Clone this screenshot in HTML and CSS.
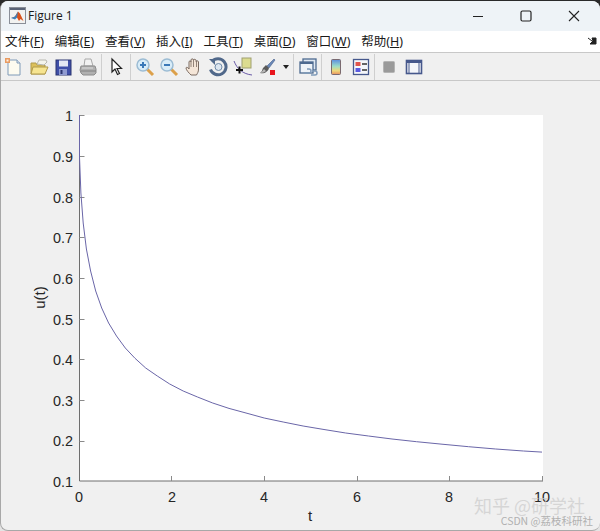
FILE: index.html
```html
<!DOCTYPE html>
<html lang="zh">
<head>
    <meta charset="utf-8" />
    <title>Figure 1</title>
    <link rel="stylesheet" href="styles.css">
</head>
<body>
<div class="window">
    <div class="titlebar">
        <svg class="app-icon" width="17" height="17" viewBox="0 0 17 17">
            <rect x="0.500" y="0.500" width="16" height="16" fill="#f2f2f0" stroke="#8a8f98"/>
            <rect x="1" y="1" width="15" height="2" fill="#5a6478"/>
            <path d="M2 11l4-1.500 3-5 2 2 3.500 7.500-3-2-1.500 2-2-3.500z" fill="#d8521c"/>
            <path d="M2 11l4-1.500 3-5-1 6-2 2z" fill="#3f80b8"/>
        </svg>
        <span class="title">Figure 1</span>
        <div class="winbtns">
            <svg width="12" height="12" viewBox="0 0 12 12"><path d="M1 6.500h10" stroke="#222" stroke-width="1.200"/></svg>
            <svg width="12" height="12" viewBox="0 0 12 12"><rect x="1" y="1" width="10" height="10" rx="1.500" fill="none" stroke="#222" stroke-width="1.200"/></svg>
            <svg width="12" height="12" viewBox="0 0 12 12"><path d="M1 1l10 10M11 1l-10 10" stroke="#222" stroke-width="1.100"/></svg>
        </div>
    </div>
    <div class="menubar">
        <span>文件(<u>F</u>)</span>
        <span>编辑(<u>E</u>)</span>
        <span>查看(<u>V</u>)</span>
        <span>插入(<u>I</u>)</span>
        <span>工具(<u>T</u>)</span>
        <span>桌面(<u>D</u>)</span>
        <span>窗口(<u>W</u>)</span>
        <span>帮助(<u>H</u>)</span>
        <svg class="dock" width="10" height="8" viewBox="0 0 10 8"><path d="M1 1l4 3M5 1h4v6H3l3-3z" fill="#222" stroke="#222"/></svg>
    </div>
    <div class="toolbar">
        <!-- new -->
        <div class="tool"><svg width="20" height="20" viewBox="0 0 20 20"><path d="M4 3h9l3 3v12H4z" fill="#fdfbf0" stroke="#7f9ab8"/><path d="M13 3v3h3" fill="#dfe6ee" stroke="#7f9ab8"/><rect x="1" y="1" width="5" height="5" fill="#e89a60"/><rect x="2.500" y="2.500" width="2" height="2" fill="#fff0e0"/></svg></div>
        <!-- open -->
        <div class="tool"><svg width="20" height="20" viewBox="0 0 20 20"><path d="M2 6h5l1 2h8v9H2z" fill="#dcc05a" stroke="#b09a4c"/><path d="M8 7l2-4h7l1 2-3 3z" fill="#f4f4ec" stroke="#b8b8b0"/><path d="M2 17l2-7h15l-3 7z" fill="#f6e490" stroke="#b09a4c"/></svg></div>
        <!-- save -->
        <div class="tool"><svg width="20" height="20" viewBox="0 0 20 20"><rect x="3" y="3" width="15" height="15" fill="#3f4fa8" stroke="#2b3570"/><rect x="6" y="3.500" width="9" height="6" fill="#e4e8f4"/><rect x="6" y="12" width="8" height="6" fill="#8f9ad0"/><rect x="7.500" y="13" width="2" height="4" fill="#2b3570"/></svg></div>
        <!-- print -->
        <div class="tool"><svg width="20" height="20" viewBox="0 0 20 20"><path d="M7 2h6l2 7H6z" fill="#f2f2f2" stroke="#a8a8a8"/><path d="M3 9h14l1 3v4l-2 2H5l-2-2-1-3z" fill="#b0b0b0" stroke="#8c8c8c"/><path d="M3 14h15" stroke="#808080"/><path d="M4 11h11" stroke="#dcdcdc"/></svg></div>
        <i class="sep"></i>
        <!-- arrow -->
        <div class="tool"><svg width="20" height="20" viewBox="0 0 20 20"><path d="M6 2v13l3-3 2.500 5.500 2-1-2.500-5h4.500z" fill="#fff" stroke="#222" stroke-width="1.200"/></svg></div>
        <i class="sep"></i>
        <!-- zoom in -->
        <div class="tool"><svg width="20" height="20" viewBox="0 0 20 20"><path d="M12 12l6 6" stroke="#dca04a" stroke-width="3"/><circle cx="8" cy="8" r="6" fill="#d8ecf8" stroke="#9cbcd4" stroke-width="1.500"/><path d="M5 8h6M8 5v6" stroke="#3a78b8" stroke-width="2"/></svg></div>
        <!-- zoom out -->
        <div class="tool"><svg width="20" height="20" viewBox="0 0 20 20"><path d="M12 12l6 6" stroke="#dca04a" stroke-width="3"/><circle cx="8" cy="8" r="6" fill="#d8ecf8" stroke="#9cbcd4" stroke-width="1.500"/><path d="M5 8h6" stroke="#3a78b8" stroke-width="2"/></svg></div>
        <!-- pan -->
        <div class="tool"><svg width="20" height="20" viewBox="0 0 20 20"><path d="M7 18c-2-2-5-5-5-7 0-1 2-1 3 1V5c0-1.500 2-1.500 2 0V3c0-1.500 2.500-1.500 2.500 0v0c0-1 2.500-1 2.500.500v1c0-1 2.500-1 2.500.500V12c0 3-1 4-2 6z" fill="#f5e6d8" stroke="#7a6a60"/><path d="M7 5v5M9.500 3v7M12.500 4v6" stroke="#7a6a60" stroke-width=".8"/></svg></div>
        <!-- rotate -->
        <div class="tool"><svg width="20" height="20" viewBox="0 0 20 20"><path d="M4 4.500a8 8 0 1 1-1.500 8" fill="none" stroke="#50688a" stroke-width="3"/><path d="M1 2h6v6z" fill="#50688a"/><circle cx="10.500" cy="10" r="3.500" fill="#dce6f0" stroke="#6f8aa8"/></svg></div>
        <!-- data cursor -->
        <div class="tool"><svg width="20" height="20" viewBox="0 0 20 20"><path d="M1 4c3 8 9 13 18 14" fill="none" stroke="#6a5aa8"/><rect x="9" y="1" width="9" height="10" fill="#dcdc90" stroke="#a0a070"/><path d="M3 13h7M6.500 9.500v7" stroke="#111" stroke-width="2"/></svg></div>
        <!-- brush -->
        <div class="tool"><svg width="20" height="20" viewBox="0 0 20 20"><path d="M10 9l7-7 1 1-6 8z" fill="#6a88b8" stroke="#47608a" stroke-width=".6"/><path d="M9 8l3 3c-1 4-5 6-9 5 2-1 2-3 3-5z" fill="#5a5a5a"/><path d="M3 16c2-1 3-3 4-4l2 2c-1 1-3 2-6 2z" fill="#b8b8b8"/><rect x="13" y="13" width="5" height="5" fill="#e8141c"/></svg></div>
        <div class="drop"></div>
        <i class="sep"></i>
        <!-- link -->
        <div class="tool"><svg width="20" height="20" viewBox="0 0 20 20"><rect x="5" y="2" width="13" height="11" fill="#dfe8f2" stroke="#4d6a90" stroke-width="1.300"/><rect x="2" y="5" width="13" height="11" fill="#eef3f8" stroke="#4d6a90" stroke-width="1.300"/><rect x="2" y="5" width="13" height="2" fill="#4d6a90"/><path d="M6 16h5a2 2 0 0 0 0-4H9M13 18h4a2 2 0 0 0 0-4h-3" fill="none" stroke="#7f9ab8" stroke-width="1.500"/></svg></div>
        <i class="sep"></i>
        <!-- colorbar -->
        <div class="tool"><svg width="20" height="20" viewBox="0 0 20 20"><defs><linearGradient id="cbar" x1="0" y1="0" x2="0" y2="1"><stop offset="0" stop-color="#5a8ce0"/><stop offset=".45" stop-color="#9cdcc8"/><stop offset=".75" stop-color="#f0d878"/><stop offset="1" stop-color="#e89060"/></linearGradient></defs><rect x="5.500" y="2.500" width="9" height="15" rx="1" fill="url(#cbar)" stroke="#7a6a70"/></svg></div>
        <!-- legend -->
        <div class="tool"><svg width="20" height="20" viewBox="0 0 20 20"><rect x="2.500" y="2.500" width="15" height="15" fill="#f4f6fa" stroke="#46588c" stroke-width="1.300"/><rect x="4.500" y="5" width="5" height="4" fill="#e0544c"/><rect x="4.500" y="11" width="5" height="4" fill="#5a5ae0"/><path d="M11 7h5M11 13h5" stroke="#333" stroke-width="1.300"/></svg></div>
        <i class="sep"></i>
        <!-- hide tools -->
        <div class="tool"><svg width="20" height="20" viewBox="0 0 20 20"><rect x="4.500" y="4.500" width="11" height="11" rx="1" fill="#9a9a9a" stroke="#b4b4b4"/></svg></div>
        <!-- show tools -->
        <div class="tool"><svg width="20" height="20" viewBox="0 0 20 20"><rect x="2.500" y="3.500" width="15" height="13" fill="#f4f6fa" stroke="#46588c" stroke-width="1.600"/><rect x="2.500" y="3.500" width="15" height="2.500" fill="#46588c"/><path d="M5 6v10M15 6v10" stroke="#46588c"/></svg></div>
    </div>
    <div class="figure">
        <svg class="plot" width="600" height="449" viewBox="0 81 600 449">
            <rect x="79" y="115" width="464" height="366" fill="#fff"/>
            <path class="axis" d="M79.500 115v366H543"/>
            <path class="axis thin" d="M79.500 115.500h5M79.500 156.500h5M79.500 197.500h5M79.500 237.500h5M79.500 278.500h5M79.500 319.500h5M79.500 359.500h5M79.500 400.500h5M79.500 441.500h5"/>
            <path class="axis thin" d="M171.500 481v-5M264.500 481v-5M357.500 481v-5M449.500 481v-5M542.500 481v-5"/>
            <polyline class="curve" points="79.500,115 79.500,157 80.900,193 83.200,223 86.400,249 90.600,271 95.700,291 101.700,308 108.600,323 116.500,336 125.300,348 135,358.300 145.700,368 157.300,376 169.700,384 183.200,391 197.500,397 212.700,403 229,408.400 246,413 264.200,418 283.200,422 303.100,426 324,429.500 345.700,433 368.500,436 392,439 416.500,441.700 442,444.200 468.500,446.700 495.700,449 523.500,451 542,452.100"/>
            <g class="ticks-y">
                <text x="73" y="121">1</text>
                <text x="73" y="162">0.9</text>
                <text x="73" y="203">0.8</text>
                <text x="73" y="243">0.7</text>
                <text x="73" y="284">0.6</text>
                <text x="73" y="325">0.5</text>
                <text x="73" y="365">0.4</text>
                <text x="73" y="406">0.3</text>
                <text x="73" y="446">0.2</text>
                <text x="73" y="487">0.1</text>
            </g>
            <g class="ticks-x">
                <text x="79" y="502">0</text>
                <text x="172" y="502">2</text>
                <text x="264" y="502">4</text>
                <text x="357" y="502">6</text>
                <text x="449" y="502">8</text>
                <text x="542" y="502">10</text>
            </g>
            <text class="label" transform="translate(45 297.500) rotate(-90)">u(t)</text>
            <text class="label" x="310" y="521">t</text>
        </svg>
        <div class="mark-big">知乎 @研学社</div>
        <div class="mark-small">CSDN @荔枝科研社</div>
    </div>
</div>
</body>
</html>
```
FILE: styles.css
```css
*
{
    box-sizing: border-box;
}

html, body
{
    margin: 0;
    height: 100%;
    overflow: hidden;
}

body
{
    background: linear-gradient(#2a2a2a 0, #2a2a2a 12px, #e4e4e4 12px);
}

.window
{
    position: relative;
    display: flex;
    flex-direction: column;
    width: 600px;
    height: 530px;
    margin-top: 1px;
    border-radius: 8px;
    overflow: hidden;
    background: #f0f0f0;
    border: 1px solid #a8a8a8;
    border-width: 0 0 1px 1px;
}

.titlebar
{
    display: flex;
    align-items: center;
    height: 30px;
    padding: 0 0 1px 8px;
    background: #eef3f7;
}

.app-icon
{
    margin-right: 2px;
}

.title
{
    font: 12px "Open Sans", sans-serif;
    color: #1a1a1a;
}

.winbtns
{
    display: flex;
    gap: 36px;
    margin-left: auto;
    margin-right: 20px;
}

.menubar
{
    display: flex;
    align-items: center;
    gap: 10.800px;
    height: 22px;
    padding: 0 0 2px 4px;
    background: #fff;
    border-bottom: 1px solid #c8c8c8;
    font: 12.500px "Noto Sans", "Noto Sans CJK SC", sans-serif;
    color: #1a1a1a;
}

.dock
{
    margin-left: auto;
    margin-right: 3px;
}

.toolbar
{
    display: flex;
    align-items: center;
    height: 28px;
    padding-left: 1px;
    background: #f0f0f0;
    border-bottom: 1px solid #c8c8c8;
}

.tool
{
    display: flex;
    justify-content: center;
    width: 24.500px;
}

.sep
{
    width: 1px;
    height: 26px;
    margin: 0 2px 0 1px;
    background: #cfcfcf;
}

.drop
{
    width: 0;
    height: 0;
    margin: 0 3px;
    border: 3px solid transparent;
    border-top: 4px solid #222;
    border-bottom: 0;
}

.figure
{
    position: relative;
    flex: 1;
}

.plot
{
    display: block;
    margin-left: -1px;
}

.plot text
{
    font-family: "Liberation Sans", sans-serif;
    font-size: 14.400px;
    fill: #262626;
}

.ticks-y text
{
    text-anchor: end;
}

.ticks-x text
{
    text-anchor: middle;
}

.plot .label
{
    font-size: 15px;
    text-anchor: middle;
}

.axis
{
    fill: none;
    stroke: #6e6e6e;
    stroke-width: 1;
}

.thin
{
    stroke: #8a8a8a;
}

.curve
{
    fill: none;
    stroke: #6a66a8;
    stroke-width: 1;
}

.mark-big
{
    position: absolute;
    right: 15px;
    bottom: 12px;
    font: 18px "Noto Sans CJK SC", sans-serif;
    color: rgba(205, 205, 205, 0.75);
    white-space: nowrap;
}

.mark-small
{
    position: absolute;
    right: 7px;
    bottom: 2px;
    font: 10.500px "Noto Sans CJK SC", sans-serif;
    color: #b0b0b0;
    white-space: nowrap;
}
```
